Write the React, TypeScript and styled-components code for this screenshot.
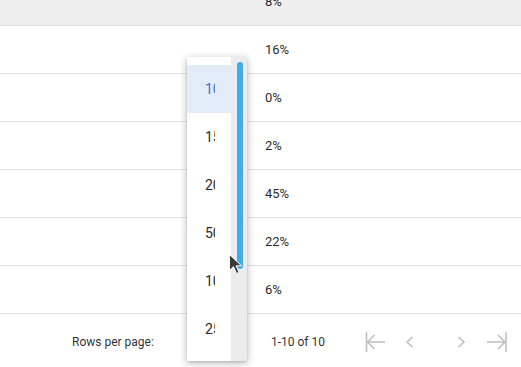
import styled, { createGlobalStyle } from "styled-components";

const GlobalStyle = createGlobalStyle`
  html, body {
    margin: 0;
    padding: 0;
    background: #ffffff;
    overflow: hidden;
  }
  body {
    font-family: Roboto, "Liberation Sans", Arial, sans-serif;
  }
`;

const Page = styled.div`
  position: relative;
  width: 521px;
  height: 367px;
  overflow: hidden;
  background: #ffffff;
`;

const Body = styled.div`
  margin-top: -22px;
  display: flex;
  flex-direction: column;
`;

const Row = styled.div<{ $hover?: boolean }>`
  display: grid;
  grid-template-columns: 249px 1fr;
  height: 47px;
  border-bottom: 1px solid #e0e0e0;
  background: ${(p) => (p.$hover ? "#eeeeee" : "#ffffff")};
`;

const Cell = styled.div`
  display: flex;
  align-items: center;
  padding: 0 16px;
  font-size: 13px;
  color: rgba(0, 0, 0, 0.87);
`;

const Footer = styled.div`
  display: flex;
  align-items: center;
  height: 56px;
  padding-left: 72px;
  font-size: 12px;
  color: rgba(0, 0, 0, 0.84);
`;

const Label = styled.span`
  width: 115px;
`;

const SelectSlot = styled.div`
  width: 60px;
`;

const Range = styled.span`
  width: 93px;
  margin-left: 24px;
`;

const IconButton = styled.button<{ $ml: number }>`
  display: flex;
  width: 24px;
  height: 24px;
  padding: 0;
  margin: 0 0 0 ${(p) => p.$ml}px;
  border: none;
  background: none;
  cursor: default;

  svg {
    width: 24px;
    height: 24px;
    fill: none;
    stroke: #bdbdbd;
    stroke-width: 1.5;
  }
`;

const Popup = styled.div`
  position: absolute;
  left: 187px;
  top: 57px;
  width: 60px;
  height: 304px;
  display: flex;
  background: #ffffff;
  box-shadow: 0 2px 8px rgba(0, 0, 0, 0.28), 0 1px 2px rgba(0, 0, 0, 0.12);
`;

const List = styled.ul`
  list-style: none;
  margin: 0;
  padding: 8px 0;
  width: 44px;
`;

const Item = styled.li<{ $active?: boolean }>`
  display: flex;
  align-items: center;
  height: 48px;
  padding-left: 18px;
  font-size: 14px;
  background: ${(p) => (p.$active ? "#e2ebf8" : "transparent")};
  color: ${(p) => (p.$active ? "#3b6fd3" : "#2a2a2a")};
`;

const ItemLabel = styled.span`
  width: 10px;
  overflow: hidden;
  white-space: nowrap;
`;

const Track = styled.div`
  width: 16px;
  display: flex;
  justify-content: center;
  padding-top: 5px;
  background: #ececee;
`;

const Thumb = styled.div`
  width: 6px;
  height: 207px;
  margin-left: 1px;
  border-radius: 3px;
  background: #3daee9;
`;

const Cursor = styled.svg`
  position: absolute;
  left: 228px;
  top: 253px;
  width: 15px;
  height: 23px;
`;

const values = ["8%", "16%", "0%", "2%", "45%", "22%", "6%"];
const options = ["10", "15", "20", "50", "100", "250"];

export default function App() {
  return (
    <Page>
      <GlobalStyle />
      <Body>
        {values.map((v, i) => (
          <Row key={i} $hover={i === 0}>
            <Cell />
            <Cell>{v}</Cell>
          </Row>
        ))}
      </Body>

      <Footer>
        <Label>Rows per page:</Label>
        <SelectSlot />
        <Range>1-10 of 10</Range>
        <IconButton $ml={0} aria-label="First Page">
          <svg viewBox="0 0 24 24">
            <path d="M2.5 2v20M3.5 12H21M10.5 5L3.5 12l7 7" />
          </svg>
        </IconButton>
        <IconButton $ml={10} aria-label="Previous Page">
          <svg viewBox="0 0 24 24">
            <path d="M14.5 7L9 12l5.5 5" />
          </svg>
        </IconButton>
        <IconButton $ml={27} aria-label="Next Page">
          <svg viewBox="0 0 24 24">
            <path d="M9.5 7l5.5 5-5.5 5" />
          </svg>
        </IconButton>
        <IconButton $ml={11} aria-label="Last Page">
          <svg viewBox="0 0 24 24">
            <path d="M22 2v20M3 12h18M14 5l7 7-7 7" />
          </svg>
        </IconButton>
      </Footer>

      <Popup>
        <List>
          {options.map((o, i) => (
            <Item key={o} $active={i === 0}>
              <ItemLabel>{o}</ItemLabel>
            </Item>
          ))}
        </List>
        <Track>
          <Thumb />
        </Track>
      </Popup>

      <Cursor viewBox="0 0 15 23">
        <path
          d="M1.5 1.5v16l4-3.8 3 6.8 2.6-1.1-3-6.6h5.4z"
          fill="#3a3a3a"
          stroke="#ffffff"
          strokeWidth="1"
          strokeLinejoin="round"
        />
      </Cursor>
    </Page>
  );
}
